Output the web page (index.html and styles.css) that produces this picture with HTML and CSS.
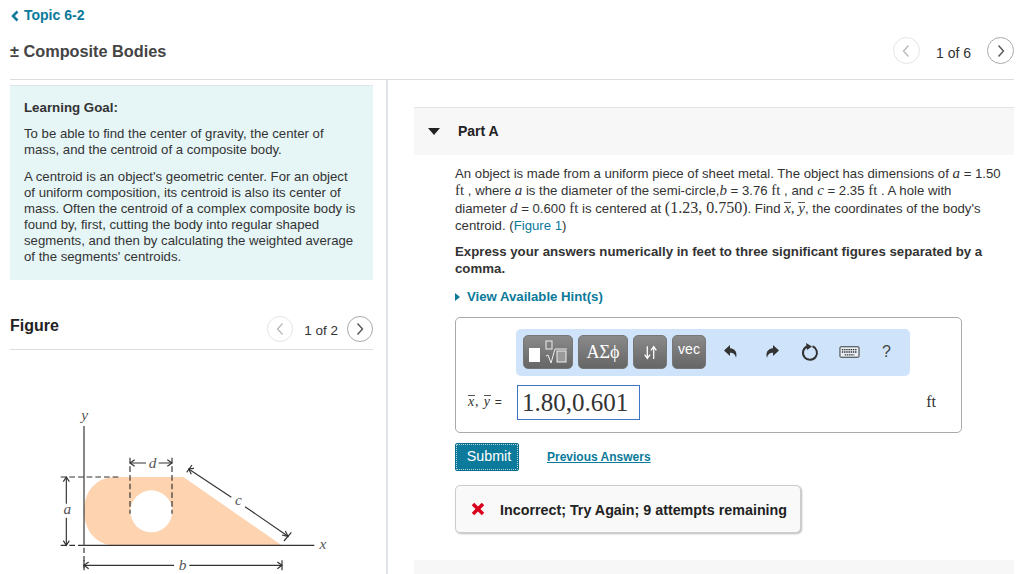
FILE: index.html
```html
<!DOCTYPE html>
<html lang="en">
<head>
    <meta charset="UTF-8">
    <title>Topic 6-2 - Composite Bodies</title>
    <link rel="stylesheet" href="styles.css">
</head>
<body>
    <div class="header">
        <a class="back-link" href="#">
            <svg class="back-icon" viewBox="0 0 10 12"><path d="M7.500 1.500 3 6l4.500 4.500" /></svg>
            Topic 6-2
        </a>
        <div class="title-row">
            <h1>± Composite Bodies</h1>
            <div class="pager pager-main">
                <button class="pager-btn off"><svg viewBox="0 0 10 14"><path d="M7.500 1.500 2.500 7l5 5.500" /></svg></button>
                <span class="pager-text">1 of 6</span>
                <button class="pager-btn"><svg viewBox="0 0 10 14"><path d="M2.500 1.500 7.500 7l-5 5.500" /></svg></button>
            </div>
        </div>
    </div>

    <div class="columns">
        <div class="left-col">
            <div class="goal">
                <h2>Learning Goal:</h2>
                <p>To be able to find the center of gravity, the center of mass, and the centroid of a composite body.</p>
                <p>A centroid is an object's geometric center. For an object of uniform composition, its centroid is also its center of mass. Often the centroid of a complex composite body is found by, first, cutting the body into regular shaped segments, and then by calculating the weighted average of the segments' centroids.</p>
            </div>
            <div class="figure-head">
                <h2>Figure</h2>
                <div class="pager">
                    <button class="pager-btn off"><svg viewBox="0 0 10 14"><path d="M7.500 1.500 2.500 7l5 5.500" /></svg></button>
                    <span class="pager-text">1 of 2</span>
                    <button class="pager-btn"><svg viewBox="0 0 10 14"><path d="M2.500 1.500 7.500 7l-5 5.500" /></svg></button>
                </div>
            </div>
            <svg class="figure" viewBox="0 0 1080 552">
                <path fill="#fdd3b0" d="M345 258H550L845 463H345C290 463 252 420 252 360S290 258 345 258Z" />
                <circle cx="454" cy="361" r="63" fill="#fff" />
                <g fill="none" stroke="#333" stroke-width="3.500">
                    <path d="M252 105V463H943" />
                    <path d="M252 470v60" stroke-dasharray="16 9" />
                    <path d="M182 258H356M182 463H252M390 200V368M516 200V368" stroke-dasharray="17 9" />
                    <path d="M199 258V338M199 380V463M390 216H438M476 216H516M252 523H522M568 523H846" />
                    <path d="M190 272 199 258 208 272M190 449 199 463 208 449" />
                    <path d="M404 206 390 216 404 226M502 206 516 216 502 226M266 513 252 523 266 533M832 513 846 523 832 533" />
                    <path d="M252 508V538M846 508V538" />
                    <path d="M566 234 694 319M735 347 864 436" />
                    <path d="M560 244 576 222M852 450 874 424" />
                    <path d="M582 232 566 234 574 250M846 432 864 436 856 420" />
                </g>
                <g class="fig-label">
                    <text x="254" y="86" text-anchor="middle">y</text>
                    <text x="458" y="230" text-anchor="middle">d</text>
                    <text x="715" y="343" text-anchor="middle">c</text>
                    <text x="202" y="369" text-anchor="middle">a</text>
                    <text x="969" y="474" text-anchor="middle">x</text>
                    <text x="548" y="536" text-anchor="middle">b</text>
                </g>
            </svg>
        </div>

        <div class="right-col">
            <div class="part-bar">
                <span class="part-arrow"></span>
                <h2>Part A</h2>
            </div>
            <div class="part-body">
                <p>An object is made from a uniform piece of sheet metal. The object has dimensions of <i class="m">a</i> = 1.50 <span class="nowrap"><span class="m">ft</span> ,</span> where <i class="m">a</i> is the diameter of the semi-circle,<i class="m">b</i> = 3.76 <span class="m">ft</span> , and <i class="m">c</i> = 2.35 <span class="m">ft</span> . A hole with <span class="nowrap">diameter <i class="m">d</i> = 0.600 <span class="m">ft</span></span> is centered at <span class="m big">(1.23, 0.750)</span>. Find <i class="m"><span class="bar">x</span>, <span class="bar">y</span></i>, the coordinates of the body's centroid. (<a class="fig-link" href="#">Figure 1</a>)</p>
                <p class="instr">Express your answers numerically in feet to three significant figures separated by a comma.</p>
                <a class="hints" href="#"><span class="hint-arrow"></span>View Available Hint(s)</a>

                <div class="answer-box">
                    <div class="toolbar">
                        <button class="tool tool-templates">
                            <span class="blank"></span>
                            <svg viewBox="0 0 24 24" class="radical">
                                <path d="M2 16l2-1 3 8 4-14h12" />
                                <rect x="2" y="1" width="6" height="8" />
                                <rect class="inner" x="13" y="11" width="9" height="11" />
                            </svg>
                        </button>
                        <button class="tool tool-greek">ΑΣϕ</button>
                        <button class="tool tool-arrows">
                            <svg viewBox="0 0 16 16"><path d="M5 2v11M2.500 10 5 13.500 7.500 10M11 14V3M8.500 6 11 2.500 13.500 6" /></svg>
                        </button>
                        <button class="tool tool-vec">vec</button>
                        <div class="tool-icons">
                            <svg class="tool-icon" viewBox="0 0 20 20"><path class="solid" d="M8 3 2 8.500 8 14v-3.300c3 0 5 1 6 5 1.500-5-.5-9-6-9.500Z" /></svg>
                            <svg class="tool-icon" viewBox="0 0 20 20"><path class="solid" d="M12 3l6 5.500L12 14v-3.300c-3 0-5 1-6 5-1.500-5 .5-9 6-9.500Z" /></svg>
                            <svg class="tool-icon" viewBox="0 0 20 20"><path class="line" d="M12.500 4.300A7 7 0 1 1 7 4.500" /><path class="solid" d="M6 1l6 3.500L7 8Z" /></svg>
                            <svg class="tool-icon keyboard" viewBox="0 0 22 14"><rect class="key-body" x="1" y="1.500" width="20" height="11" rx="1" /><path class="keys" d="M3 4.500h16M3 7h16M6 10h10" /></svg>
                            <span class="help">?</span>
                        </div>
                    </div>
                    <div class="answer-row">
                        <span class="answer-label"><i class="m"><span class="bar">x</span>, <span class="bar">y</span></i> =</span>
                        <div class="answer-input">1.80,0.601</div>
                        <span class="answer-unit">ft</span>
                    </div>
                </div>

                <div class="actions">
                    <button class="submit"><span>Submit</span></button>
                    <a class="prev-answers" href="#">Previous Answers</a>
                </div>

                <div class="feedback">
                    <svg class="x-icon" viewBox="0 0 14 14"><path d="M2 2l10 10M12 2 2 12" /></svg>
                    <span class="feedback-text">Incorrect; Try Again; 9 attempts remaining</span>
                </div>
            </div>
            <div class="part-end"></div>
        </div>
    </div>
</body>
</html>
```

FILE: styles.css
```css
* {
    box-sizing: border-box;
}

html, body {
    height: 574px;
    overflow: hidden;
}

body {
    font-family: "Liberation Sans", Arial, sans-serif;
    font-size: 13px;
    line-height: 16px;
    margin: 0;
    background-color: #fff;
    color: #333;
}

h1, h2, p {
    margin: 0;
}

a {
    color: #0b7a9b;
    text-decoration: none;
}

button {
    font-family: inherit;
    padding: 0;
}

.header {
    padding: 7px 10px 0 10px;
    height: 80px;
}

.back-link {
    display: flex;
    align-items: center;
    gap: 4px;
    font-size: 14px;
    font-weight: bold;
    line-height: 17px;
}

.back-icon {
    width: 10px;
    height: 12px;
    fill: none;
    stroke: #0b7a9b;
    stroke-width: 2.500;
}

.title-row {
    display: flex;
    justify-content: space-between;
    align-items: flex-start;
    height: 50px;
    margin-top: 6px;
    border-bottom: 1px solid #ddd;
}

h1 {
    font-size: 16.300px;
    line-height: 19px;
    margin-top: 12px;
    color: #444;
}

.pager {
    display: flex;
    align-items: center;
}

.pager-main {
    margin-top: 7px;
}

.pager-main .pager-text {
    margin: 4px 16px 0 16px;
    font-size: 14px;
}

.pager-text {
    margin: 4px 9px 0 11px;
    font-size: 13.500px;
    color: #333;
}

.pager-btn {
    width: 27px;
    height: 27px;
    border: 1px solid #aaa;
    border-radius: 50%;
    background-color: #fff;
    display: flex;
    align-items: center;
    justify-content: center;
}

.pager-btn svg {
    width: 10px;
    height: 14px;
    fill: none;
    stroke: #555;
    stroke-width: 1.400;
}

.pager-btn.off {
    border-color: #e4e4e4;
}

.pager-btn.off svg {
    stroke: #bbb;
}

.columns {
    display: flex;
    height: 494px;
}

.left-col {
    width: 388px;
    padding: 5px 13px 0 10px;
    border-right: 2px solid #dfe4ea;
}

.goal {
    height: 195px;
    padding: 14px 14px 0 14px;
    background-color: #e6f5f6;
    border-top: 1px solid #dde3e8;
}

.goal h2 {
    font-size: 13.300px;
    line-height: 16px;
    margin-bottom: 10px;
}

.goal p {
    font-size: 13.200px;
    margin-bottom: 11px;
}

.figure-head {
    display: flex;
    justify-content: space-between;
    align-items: flex-start;
    margin-top: 36px;
    height: 34px;
    border-bottom: 1px solid #ddd;
}

.figure-head h2 {
    font-size: 16px;
    line-height: 18px;
    margin-top: 1px;
    color: #222;
}

.figure-head .pager-btn {
    width: 26px;
    height: 26px;
}

.figure {
    display: block;
    width: 360px;
    height: 184px;
    margin: 41px 0 0 -10px;
}

.fig-label {
    font-family: "Liberation Serif", serif;
    font-style: italic;
    font-size: 46px;
    fill: #555;
}

.right-col {
    flex: 1;
    padding: 27px 10px 0 26px;
}

.part-bar {
    display: flex;
    align-items: center;
    height: 48px;
    background-color: #f7f7f7;
    border-top: 1px solid #e4e4e4;
}

.part-arrow {
    width: 0;
    height: 0;
    margin: 0 18px 0 14px;
    border-left: 6px solid transparent;
    border-right: 6px solid transparent;
    border-top: 7px solid #222;
}

.part-bar h2 {
    font-size: 14px;
    line-height: 16px;
    margin-bottom: 2px;
    color: #222;
}

.part-body {
    padding: 10px 0 0 41px;
    height: 405px;
}

.part-body p {
    font-size: 13.200px;
    line-height: 17.300px;
    margin-bottom: 9px;
}

.part-body .instr {
    font-size: 13.250px;
    font-weight: bold;
    margin-bottom: 11px;
}

.nowrap {
    white-space: nowrap;
}

.m {
    font-family: "Liberation Serif", serif;
    font-size: 15px;
    line-height: 1;
}

.big {
    font-size: 16px;
}

.bar {
    display: inline-block;
    line-height: 11px;
    border-top: 1px solid #555;
}

.hints {
    display: flex;
    align-items: center;
    font-size: 13.200px;
    font-weight: bold;
}

.hint-arrow {
    width: 0;
    height: 0;
    margin-right: 7px;
    border-top: 4px solid transparent;
    border-bottom: 4px solid transparent;
    border-left: 5px solid #0b7a9b;
}

.answer-box {
    width: 507px;
    height: 116px;
    margin-top: 12px;
    padding: 11px 12px 0 12px;
    border: 1px solid #aaa;
    border-radius: 5px;
}

.toolbar {
    display: flex;
    gap: 5px;
    align-items: center;
    width: 394px;
    height: 47px;
    margin-left: 48px;
    padding-left: 7px;
    background-color: #cfe4fb;
    border-radius: 5px;
}

.tool {
    height: 34px;
    border: 1px solid #777;
    border-radius: 5px;
    background: linear-gradient(#8a8a8a, #666);
    color: #fff;
    display: flex;
    align-items: center;
    justify-content: center;
}

.tool-templates {
    width: 50px;
    gap: 4px;
}

.blank {
    width: 11px;
    height: 14px;
    margin-top: 5px;
    background-color: #fff;
}

.radical {
    width: 24px;
    height: 24px;
    fill: none;
    stroke: #eee;
    stroke-width: 1;
}

.radical .inner {
    fill: #999;
}

.tool-greek {
    width: 50px;
    font-family: "Liberation Serif", serif;
    font-size: 18px;
}

.tool-arrows {
    width: 34px;
}

.tool-arrows svg {
    width: 17px;
    height: 17px;
    fill: none;
    stroke: #fff;
    stroke-width: 1.200;
}

.tool-vec {
    width: 34px;
    font-size: 14px;
    padding-bottom: 6px;
}

.tool-icons {
    display: flex;
    align-items: center;
    gap: 19px;
    margin-left: 11px;
}

.tool-icon {
    width: 20px;
    height: 20px;
}

.tool-icon .solid {
    fill: #333;
}

.tool-icon .line {
    fill: none;
    stroke: #333;
    stroke-width: 2;
}

.keyboard {
    width: 21px;
    height: 14px;
}

.key-body {
    fill: #e8eef5;
    stroke: #333;
    stroke-width: 1;
}

.keys {
    fill: none;
    stroke: #333;
    stroke-width: 1.400;
    stroke-dasharray: 1.500 .8;
}

.help {
    font-size: 16px;
    margin-left: 3px;
    color: #444;
}

.answer-row {
    display: flex;
    align-items: center;
    margin-top: 9px;
}

.answer-label {
    width: 49px;
    font-size: 12px;
    letter-spacing: .8px;
}

.answer-label .m {
    font-size: 14px;
}

.answer-input {
    width: 123px;
    height: 35px;
    padding-left: 4px;
    border: 1px solid #3f74c4;
    font-family: "Liberation Serif", serif;
    font-size: 25px;
    line-height: 33px;
    color: #333;
}

.answer-unit {
    margin-left: auto;
    margin-right: 13px;
    font-family: "Liberation Serif", serif;
    font-size: 16px;
}

.actions {
    display: flex;
    align-items: center;
    margin-top: 10px;
}

.submit {
    width: 64px;
    height: 28px;
    padding: 1px 1px 1px 5px;
    border: 1px solid #0a6c8a;
    border-radius: 2px;
    background-color: #0b7a9b;
    color: #fff;
    font-size: 14.300px;
    outline: 1px dotted rgba(255, 255, 255, .7);
    outline-offset: -2px;
}

.submit span {
    display: block;
    height: 24px;
    line-height: 23px;
}

.prev-answers {
    margin-left: 28px;
    font-size: 12px;
    font-weight: bold;
    text-decoration: underline;
}

.feedback {
    display: flex;
    align-items: center;
    gap: 15px;
    width: 346px;
    height: 48px;
    margin-top: 14px;
    padding-left: 15px;
    background-color: #f9f9f9;
    border: 1px solid #ccc;
    border-radius: 5px;
    box-shadow: 1px 1px 2px #bbb;
    font-size: 14.300px;
    font-weight: bold;
    color: #222;
}

.feedback-text {
    margin-top: 2px;
}

.x-icon {
    width: 14px;
    height: 14px;
    fill: none;
    stroke: #d9001b;
    stroke-width: 3.500;
}

.part-end {
    height: 14px;
    background-color: #f7f7f7;
}
```
